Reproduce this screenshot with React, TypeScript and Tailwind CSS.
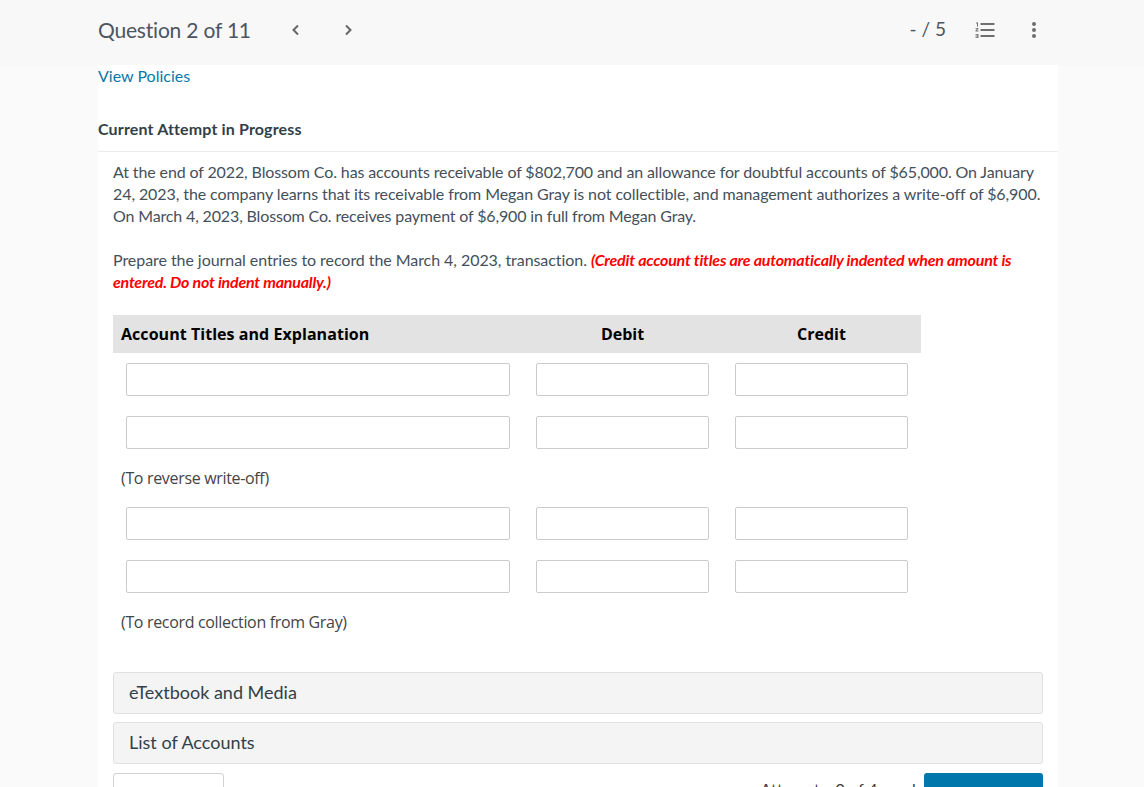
const tableFont = "font-['Open_Sans',sans-serif]";

function Field({ className = "" }: { className?: string }) {
  return <input className={`h-[33px] bg-white border border-[#cbcbcb] rounded-[2px] ${className}`} />;
}

function EntryRow() {
  return (
    <div className="flex pb-[20px]">
      <div className="w-[410px] pl-[13px]">
        <Field className="w-[384px]" />
      </div>
      <div className="w-[199px] pl-[13px]">
        <Field className="w-[173px]" />
      </div>
      <div className="w-[199px] pl-[13px]">
        <Field className="w-[173px]" />
      </div>
    </div>
  );
}

function Note({ text }: { text: string }) {
  return <div className={`h-[38px] pl-[8px] text-[16px] leading-[18px] tracking-[-0.33px] text-[#444] ${tableFont}`}>{text}</div>;
}

function Panel({ title }: { title: string }) {
  return (
    <div className="h-[42px] flex items-center pl-[15px] pb-[2px] bg-[#f4f4f4] border border-[#e0e0e0] rounded-[3px] text-[18px] text-[#333f48]">
      {title}
    </div>
  );
}

export default function App() {
  return (
    <div className="h-[787px] overflow-hidden bg-[#fafafa] font-['Lato',sans-serif]">
      <header className="h-[65px] pb-[6px] bg-[#f8f8f8] flex items-center pl-[98px] text-[#555]">
        <span className="w-[192px] text-[21px] tracking-[-0.2px] text-[#4d5560]">Question 2 of 11</span>
        <svg width="12" height="14" viewBox="0 0 12 14" className="mr-[40px]" fill="none" stroke="#666" strokeWidth="2">
          <path d="M8 2.5 3.5 7 8 11.5" />
        </svg>
        <svg width="12" height="14" viewBox="0 0 12 14" fill="none" stroke="#666" strokeWidth="2">
          <path d="M4 2.5 8.5 7 4 11.5" />
        </svg>
        <span className="ml-auto mr-[1px] text-[19px] text-[#4d5560]">- / 5</span>
        <svg width="20" height="18" viewBox="0 0 20 18" className="ml-[28px]" fill="#6e6e6e">
          <rect x="5.5" y="2" width="14" height="2" />
          <rect x="5.5" y="8" width="14" height="2" />
          <rect x="5.5" y="14" width="14" height="2" />
          <path d="M1 1.5h2v4H2V2.5H1z" />
          <path d="M0.5 7h3v.8L1.7 9.6h1.8v.8h-3v-.8L2.3 7.8H.5z" />
          <path d="M.5 13h3v4h-3v-.8h2v-.8h-2v-.8h2v-.8h-2z" />
        </svg>
        <svg width="6" height="18" viewBox="0 0 6 18" className="ml-[36px] mr-[107px]" fill="#6e6e6e">
          <circle cx="3" cy="3" r="2" />
          <circle cx="3" cy="9" r="2" />
          <circle cx="3" cy="15" r="2" />
        </svg>
      </header>
      <main className="w-[960px] ml-[98px] bg-white h-[722px]">
        <div className="h-[42px] text-[16px] leading-[22px] text-[#0a78ab]">View Policies</div>
        <div className="h-[45px] pt-[11px] border-b border-[#ececec] text-[16px] leading-[22px] font-bold tracking-[0.15px] text-[#333f48]">
          Current Attempt in Progress
        </div>
        <div className="pl-[15px] pr-[15px] pt-[9px] text-[16px] leading-[22px] text-[#44505a]">
          <p className="tracking-[-0.12px]">
            At the end of 2022, Blossom Co. has accounts receivable of $802,700 and an allowance for doubtful accounts of $65,000. On January{" "}
            <span className="tracking-[-0.09px]">
              24, 2023, the company learns that its receivable from Megan Gray is not collectible, and management authorizes a write-off of $6,900.
            </span>{" "}
            <span className="tracking-[-0.15px]">
              On March 4, 2023, Blossom Co. receives payment of $6,900 in full from Megan Gray.
            </span>
          </p>
          <p className="mt-[22px] w-[915px] tracking-[-0.06px]">
            Prepare the journal entries to record the March 4, 2023, transaction.{" "}
            <em className="font-bold text-[#f00] tracking-[-0.22px]">
              (Credit account titles are automatically indented when amount is entered. Do not indent manually.)
            </em>
          </p>
          <div className="w-[808px] mt-[22px]">
            <div className={`h-[38px] mb-[10px] flex items-center bg-[#e3e3e3] font-bold text-[16px] text-black ${tableFont}`}>
              <div className="w-[410px] pl-[8px] tracking-[0.05px]">Account Titles and Explanation</div>
              <div className="w-[199px] text-center">Debit</div>
              <div className="w-[199px] text-center">Credit</div>
            </div>
            <EntryRow />
            <EntryRow />
            <Note text="(To reverse write-off)" />
            <EntryRow />
            <EntryRow />
            <Note text="(To record collection from Gray)" />
          </div>
          <div className="mt-[21px] flex flex-col gap-[8px]">
            <Panel title="eTextbook and Media" />
            <Panel title="List of Accounts" />
          </div>
          <div className="mt-[9px] flex items-start">
            <div className="w-[111px] h-[40px] bg-white border border-[#d0d0d0] rounded-[3px]" />
            <span className="ml-auto mr-[8px] mt-[5px] text-[#333f48] text-[16px] tracking-[0.2px]">Attempts: 0 of 4 used</span>
            <div className="w-[119px] h-[40px] bg-[#0077aa] rounded-[3px]" />
          </div>
        </div>
      </main>
    </div>
  );
}
